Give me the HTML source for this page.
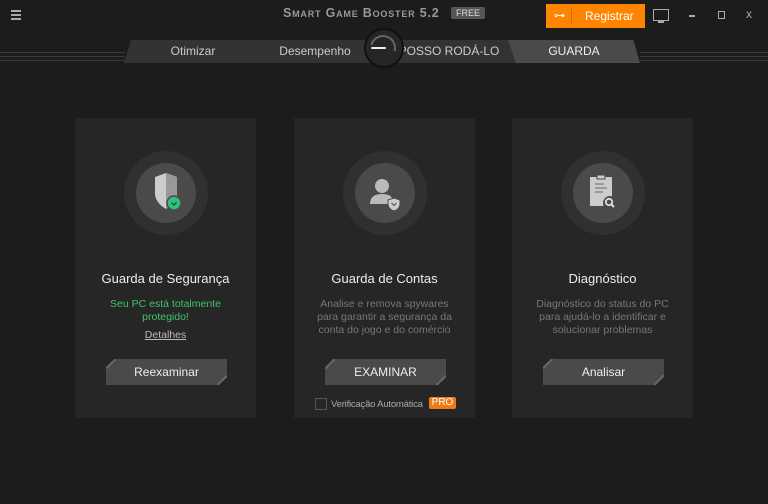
<!DOCTYPE html><html><head><style>
body{margin:0;width:768px;height:504px;background:#1c1c1c;font-family:"Liberation Sans",sans-serif;position:relative;overflow:hidden;color:#ddd}
.a{position:absolute}
.card{position:absolute;top:118px;width:181px;height:300px;background:#262626;text-align:center}
.oc{position:absolute;left:49px;top:33px;width:84px;height:84px;border-radius:50%;background:#303030}
.ic{position:absolute;left:12px;top:12px;width:60px;height:60px;border-radius:50%;background:#4a4a4a}
.t{position:absolute;top:153px;width:100%;font-size:13px;color:#eee}
.d{position:absolute;top:180px;width:100%;font-size:10.5px;line-height:13px;color:#777}
.btn{position:absolute;left:31px;top:241px;width:121px;height:26px;background:#4a4a4a;color:#eee;font-size:12px;line-height:27px}
.btn:before{content:"";position:absolute;left:0;top:0;width:10px;height:10px;background:linear-gradient(135deg,#262626 40%,#666 40%,#666 55%,#4a4a4a 55%)}
.btn:after{content:"";position:absolute;right:0;bottom:0;width:10px;height:10px;background:linear-gradient(135deg,#4a4a4a 45%,#666 45%,#666 60%,#262626 60%)}
.tab{position:absolute;top:40px;height:23px;background:#333;color:#ccc;font-size:12px;line-height:23px;text-align:center}
</style></head><body>
<div class="a" style="left:11px;top:10px;width:10px;height:2px;background:#aaa;box-shadow:0 4px 0 #aaa,0 8px 0 #aaa"></div>
<div class="a" style="left:283px;top:6px;font-size:12.5px;letter-spacing:0.8px;color:#999;font-weight:bold;font-variant:small-caps;white-space:nowrap">Smart Game Booster 5.2</div>
<div class="a" style="left:451px;top:7px;width:34px;height:12px;background:#555;color:#ddd;font-size:9px;line-height:12px;text-align:center;border-radius:2px">FREE</div>
<div class="a" style="left:546px;top:4px;width:99px;height:24px;background:#ff8400;color:#fff;font-size:12px;line-height:24px"><span style="position:absolute;left:8px;top:0;font-size:11px">⊶</span><span style="position:absolute;left:25px;top:5px;width:1px;height:14px;background:#d06a00"></span><span style="position:absolute;left:39px">Registrar</span></div>
<div class="a" style="left:653px;top:9px;width:14px;height:10px;border:1.5px solid #aaa"></div>
<div class="a" style="left:658px;top:21px;width:6px;height:2px;background:#aaa"></div>
<div class="a" style="left:689px;top:15px;width:6px;height:2px;background:#aaa"></div>
<div class="a" style="left:718px;top:11px;width:5px;height:6px;border:1.5px solid #aaa"></div>
<div class="a" style="left:746px;top:7px;font-size:12px;color:#aaa">x</div>
<div class="a" style="left:0;top:52px;width:125px;height:1px;background:#3a3a3a;box-shadow:0 4px 0 #3a3a3a,0 8px 0 #3a3a3a"></div>
<div class="a" style="left:640px;top:52px;width:128px;height:1px;background:#3a3a3a;box-shadow:0 4px 0 #3a3a3a,0 8px 0 #3a3a3a"></div>
<div class="tab" style="left:124px;width:138px;clip-path:polygon(5% 0,100% 0,95% 100%,0 100%)">Otimizar</div>
<div class="tab" style="left:250px;width:130px;clip-path:polygon(5% 0,100% 0,100% 100%,0 100%)">Desempenho</div>
<div class="tab" style="left:390px;width:130px;clip-path:polygon(0 0,95% 0,100% 100%,0 100%)"><span style="position:relative;left:-6px">POSSO RODÁ-LO</span></div>
<div class="tab" style="left:508px;width:132px;background:#4a4a4a;color:#eee;clip-path:polygon(0 0,95% 0,100% 100%,6% 100%)">GUARDA</div>
<div class="a" style="left:364px;top:28px;width:36px;height:36px;border-radius:50%;background:#262626;border:2px solid #111"></div>
<div class="a" style="left:370px;top:35px;width:22px;height:22px;border-radius:50%;border:2px solid #666;border-color:#666 #666 transparent transparent;transform:rotate(-30deg)"></div>
<div class="a" style="left:371px;top:47px;width:15px;height:2px;background:#eee;border-radius:2px"></div>

<div class="card" style="left:75px"><div class="oc"><div class="ic">
<svg width="60" height="60"><path d="M19 14 L30 10 L41 14 L41 30 C41 38 35 43 30 46 C25 43 19 38 19 30Z" fill="#ccc"/><path d="M30 10 L41 14 L41 30 C41 38 35 43 30 46Z" fill="#999"/><circle cx="38" cy="40" r="7" fill="#2ec27e" stroke="#4a4a4a" stroke-width="1.5"/><path d="M35.5 39.5 L38 42 L40.5 39.5" stroke="#1a5a3a" fill="none" stroke-width="1.4"/></svg></div></div>
<div class="t">Guarda de Segurança</div>
<div class="d" style="color:#3ec46d">Seu PC está totalmente<br>protegido!</div>
<div class="d" style="top:211px;color:#bbb;text-decoration:underline">Detalhes</div>
<div class="btn">Reexaminar</div></div>

<div class="card" style="left:294px"><div class="oc"><div class="ic">
<svg width="60" height="60"><circle cx="27" cy="23" r="7" fill="#bbb"/><path d="M15 41 C15 33 21 31 27 31 C33 31 37 33 37 36 L37 41Z" fill="#bbb"/><path d="M33 37 L39 35 L45 37 L45 41 C45 45 42 47 39 48 C36 47 33 45 33 41Z" fill="#ccc" stroke="#4a4a4a"/><path d="M36.5 40 L39 42.5 L41.5 40" stroke="#666" fill="none" stroke-width="1.3"/></svg></div></div>
<div class="t">Guarda de Contas</div>
<div class="d">Analise e remova spywares<br>para garantir a segurança da<br>conta do jogo e do comércio</div>
<div class="btn">EXAMINAR</div>
<div class="a" style="left:21px;top:280px;width:10px;height:10px;border:1px solid #555"></div>
<div class="a" style="left:37px;top:281px;font-size:9.5px;letter-spacing:-0.2px;color:#aaa">Verificação Automática</div>
<div class="a" style="left:135px;top:279px;width:27px;height:12px;background:#f07a16;color:#fff;font-size:10px;line-height:12px;border-radius:2px">PRO</div></div>

<div class="card" style="left:512px"><div class="oc"><div class="ic">
<svg width="60" height="60"><rect x="17" y="14" width="22" height="29" fill="#ccc"/><rect x="24" y="12" width="8" height="4" fill="#ccc" stroke="#4a4a4a"/><path d="M22 21h9M22 25h12M22 29h8" stroke="#888" stroke-width="1.5"/><circle cx="37" cy="40" r="7" fill="#4a4a4a"/><circle cx="36" cy="39" r="3.2" fill="none" stroke="#ddd" stroke-width="1.8"/><path d="M38 41 L41 44" stroke="#ddd" stroke-width="2"/></svg></div></div>
<div class="t">Diagnóstico</div>
<div class="d">Diagnóstico do status do PC<br>para ajudá-lo a identificar e<br>solucionar problemas</div>
<div class="btn">Analisar</div></div>
</body></html>
